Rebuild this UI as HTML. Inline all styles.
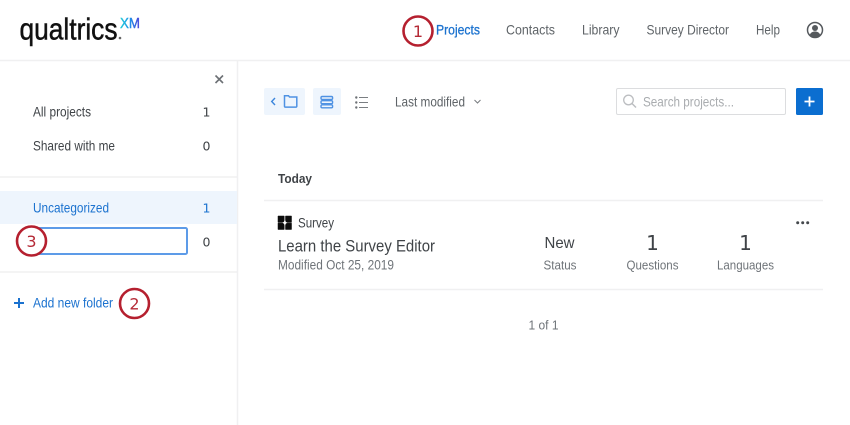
<!DOCTYPE html>
<html lang="en">
<head>
<meta charset="utf-8">
<title>Projects</title>
<style>
html,body{margin:0;padding:0;background:#fff;width:850px;height:425px;overflow:hidden}
svg{display:block;filter:blur(.3px)}
text{font-family:"Liberation Sans",sans-serif;font-size:14px;fill:#3f4347}
.d{font-family:"DejaVu Sans",sans-serif;font-size:12.500px}
.g{fill:#6f7479}
.n{fill:#5f6468}
.b{fill:#1b72cf}
.r{font-family:"DejaVu Sans",sans-serif;fill:#b52a36;font-size:16px}
.c{fill:#fff;stroke:#b5202f;stroke-width:2.6}
.h{stroke:#f0f0f1;stroke-width:1.5;fill:none}
</style>
</head>
<body>
<svg width="850" height="425" viewBox="0 0 850 425" xmlns="http://www.w3.org/2000/svg">
<defs>
<linearGradient id="xm" gradientUnits="userSpaceOnUse" x1="120" x2="140" y1="0" y2="0"><stop offset="0" stop-color="#1fd0d8"/><stop offset=".5" stop-color="#1e8fe8"/><stop offset="1" stop-color="#4a3fd8"/></linearGradient>
</defs>
<rect width="850" height="425" fill="#fff"/>
<!-- header -->
<path class="h" d="M0 60.500H850"/>
<text x="19.500" y="39.500" style="font-size:31px;fill:#111;stroke:#111;stroke-width:.5" textLength="98" lengthAdjust="spacingAndGlyphs">qualtrics</text>
<circle cx="120" cy="38" r="1.300" fill="#666"/>
<text x="120" y="28" style="font-size:15px;fill:url(#xm);stroke:url(#xm);stroke-width:.4" textLength="20" lengthAdjust="spacingAndGlyphs">XM</text>
<text x="436" y="34.500" class="b" textLength="44" lengthAdjust="spacingAndGlyphs" style="stroke:#1b72cf;stroke-width:.3">Projects</text>
<text x="506" y="34.500" class="n" textLength="49" lengthAdjust="spacingAndGlyphs">Contacts</text>
<text x="582" y="34.500" class="n" textLength="37.500" lengthAdjust="spacingAndGlyphs">Library</text>
<text x="646.500" y="34.500" class="n" textLength="82.500" lengthAdjust="spacingAndGlyphs">Survey Director</text>
<text x="756" y="34.500" class="n" textLength="24" lengthAdjust="spacingAndGlyphs">Help</text>
<circle cx="815" cy="30" r="7.500" fill="none" stroke="#55595d" stroke-width="1.500"/>
<circle cx="815" cy="28" r="3" fill="#55595d"/>
<path d="M809.500 35.500c1-3 3-4 5.500-4s4.500 1 5.500 4c-3 2.600-8 2.600-11 0z" fill="#55595d"/>
<circle class="c" cx="418" cy="31" r="14.500"/>
<text x="418" y="37" class="r" text-anchor="middle">1</text>

<!-- sidebar -->
<path class="h" d="M237.500 61V425"/>
<path d="M215.500 75.500l7.500 7.500M223 75.500l-7.500 7.500" stroke="#6d7175" stroke-width="1.600" fill="none"/>
<text x="33" y="116.500" textLength="58" lengthAdjust="spacingAndGlyphs">All projects</text>
<text x="202.500" y="116.500" class="d">1</text>
<text x="33" y="150.500" textLength="82" lengthAdjust="spacingAndGlyphs">Shared with me</text>
<text x="202.500" y="150.500" class="d">0</text>
<path class="h" d="M0 177H237"/>
<rect x="0" y="191" width="237" height="33" fill="#eef5fd"/>
<text x="33" y="212.500" class="b" textLength="76" lengthAdjust="spacingAndGlyphs">Uncategorized</text>
<text x="202.500" y="212.500" class="d b">1</text>
<rect x="31" y="228" width="156" height="26" rx="1.500" fill="#fff" stroke="#5d9be8" stroke-width="2"/>
<text x="202.500" y="246.500" class="d">0</text>
<circle class="c" cx="31.500" cy="241" r="14.500"/>
<text x="31.500" y="247" class="r" text-anchor="middle">3</text>
<path class="h" d="M0 272H237"/>
<path d="M19 298v10M14 303h10" stroke="#1b72cf" stroke-width="2" fill="none"/>
<text x="33" y="307.500" class="b" textLength="80" lengthAdjust="spacingAndGlyphs">Add new folder</text>
<circle class="c" cx="134.500" cy="303.500" r="14.500"/>
<text x="134.500" y="309.500" class="r" text-anchor="middle">2</text>

<!-- toolbar -->
<rect x="264" y="88" width="41" height="27" rx="2" fill="#eef5fd"/>
<path d="M275 98l-3.300 3.500 3.300 3.500" fill="none" stroke="#3c86dc" stroke-width="1.400"/>
<path d="M284.500 95.700h4l1 1.300h7.300v9.300a.8.800 0 0 1-.8.800h-10.700a.8.800 0 0 1-.8-.8z" fill="none" stroke="#4f92e3" stroke-width="1.500"/>
<rect x="313" y="88" width="28" height="27" rx="2" fill="#eef5fd"/>
<rect x="321" y="96.500" width="11.600" height="3" rx="1.200" fill="none" stroke="#4f92e3" stroke-width="1.400"/>
<rect x="321" y="100.700" width="11.600" height="3" rx="1.200" fill="none" stroke="#4f92e3" stroke-width="1.400"/>
<rect x="321" y="104.800" width="11.600" height="3" rx="1.200" fill="none" stroke="#4f92e3" stroke-width="1.400"/>
<path d="M359 97.500h9M359 102.500h9M359 107.500h9" stroke="#7a7e82" stroke-width="1.100" fill="none"/>
<circle cx="356.300" cy="97.500" r="1.200" fill="#6d7175"/><circle cx="356.300" cy="102.500" r="1.200" fill="#6d7175"/><circle cx="356.300" cy="107.500" r="1.200" fill="#6d7175"/>
<text x="395" y="106.500" class="n" textLength="70" lengthAdjust="spacingAndGlyphs">Last modified</text>
<path d="M474.500 100l3 3 3-3" fill="none" stroke="#777b7f" stroke-width="1"/>
<rect x="616.500" y="88.500" width="169" height="26" rx="1.500" fill="#fff" stroke="#dcdddf"/>
<circle cx="628.500" cy="100" r="4.800" fill="none" stroke="#bcbec1" stroke-width="1.300"/>
<path d="M632 103.500l4 4" stroke="#bcbec1" stroke-width="1.500"/>
<text x="643" y="106.500" style="fill:#a9acaf" textLength="91" lengthAdjust="spacingAndGlyphs">Search projects...</text>
<rect x="796" y="88" width="27" height="27" rx="1.500" fill="#0b6ed0"/>
<path d="M809.500 96.500v10M804.500 101.500h10" stroke="#fff" stroke-width="1.800"/>

<!-- list -->
<text x="278" y="183" style="font-weight:bold;font-size:13px" textLength="34" lengthAdjust="spacingAndGlyphs">Today</text>
<path class="h" d="M264 200.500H823"/>
<path d="M278 216h6.200v4.200q0 1.800-1.800 2.200H278zM291.500 216h-6v4.200q0 1.800 1.800 2.200h4.200zM278 229.500h6.200v-4.200q0-1.800-1.800-2.200H278zM291.500 229.500h-6v-4.200q0-1.800 1.800-2.200h4.200z" fill="#0c0c0c" stroke="#0c0c0c" stroke-width=".5"/>
<text x="298" y="227.500" style="font-size:13.500px" textLength="36" lengthAdjust="spacingAndGlyphs">Survey</text>
<text x="278" y="251.500" style="font-size:16.500px" textLength="157" lengthAdjust="spacingAndGlyphs">Learn the Survey Editor</text>
<text x="278" y="269.500" class="g" style="font-size:13.500px" textLength="116" lengthAdjust="spacingAndGlyphs">Modified Oct 25, 2019</text>
<text x="544.500" y="248" style="font-size:16px" textLength="30" lengthAdjust="spacingAndGlyphs">New</text>
<text x="543.500" y="269.500" class="g" style="font-size:13px" textLength="33" lengthAdjust="spacingAndGlyphs">Status</text>
<text x="652.500" y="250" text-anchor="middle" class="d" style="font-size:20px">1</text>
<text x="626.500" y="269.500" class="g" style="font-size:13px" textLength="52" lengthAdjust="spacingAndGlyphs">Questions</text>
<text x="745.500" y="250" text-anchor="middle" class="d" style="font-size:20px">1</text>
<text x="717" y="269.500" class="g" style="font-size:13px" textLength="57" lengthAdjust="spacingAndGlyphs">Languages</text>
<circle cx="797.700" cy="222.800" r="1.500" fill="#44484c"/><circle cx="802.700" cy="222.800" r="1.500" fill="#44484c"/><circle cx="807.700" cy="222.800" r="1.500" fill="#44484c"/>
<path class="h" d="M264 289.500H823"/>
<text x="528.500" y="329.500" class="g" style="font-size:13px" textLength="30" lengthAdjust="spacingAndGlyphs">1 of 1</text>
</svg>
</body>
</html>
